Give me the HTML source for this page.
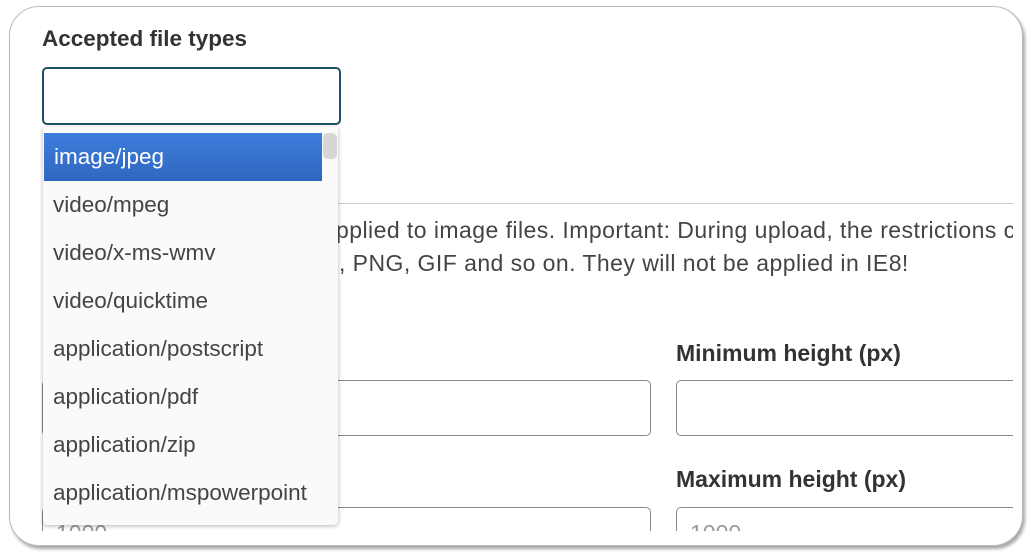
<!DOCTYPE html>
<html><head><meta charset="utf-8"><style>
html,body{margin:0;padding:0;background:#fff;width:1032px;height:556px;overflow:hidden;font-family:"Liberation Sans",sans-serif;color:#333}
.card{position:absolute;left:9px;top:6px;width:1012px;height:538px;border:1px solid #bbb;border-radius:30px;box-shadow:2px 3px 3px rgba(0,0,0,.35);background:#fff;overflow:hidden}
.clip{position:absolute;left:0;top:0;width:1003px;height:524px;overflow:hidden}
.abs{position:absolute;white-space:nowrap}
.lbl{font-weight:bold;font-size:22.5px;color:#333}
.txt{font-size:23px;color:#444}
.inp{position:absolute;border:1px solid #888;border-radius:5px;background:#fff}
.dd{position:absolute;left:33px;top:120px;width:295px;height:398px;background:#fafafa;box-shadow:0 1px 4px rgba(0,0,0,.3);border-radius:0 0 4px 4px}
.it{position:absolute;left:0;width:278px;height:48px;line-height:48px;padding-left:10px;font-size:22.5px;color:#444;box-sizing:border-box}
</style></head><body>
<div class="card"><div class="clip">
<div class="abs lbl" style="left:32px;top:19px">Accepted file types</div>
<div class="inp" style="left:32px;top:60px;width:295px;height:54px;border:2px solid #1f4f63"></div>
<div class="abs" style="left:328px;top:196px;width:680px;height:1px;background:#ccc"></div>
<div class="abs txt" style="left:326px;top:210px;letter-spacing:0.45px">pplied to image files. Important: During upload, the restrictions c</div>
<div class="abs txt" style="left:329px;top:243px;letter-spacing:0.45px">, PNG, GIF and so on. They will not be applied in IE8!</div>
<div class="abs lbl" style="left:666px;top:333px;font-size:23px">Minimum height (px)</div>
<div class="inp" style="left:32px;top:373px;width:607px;height:54px"></div>
<div class="inp" style="left:666px;top:373px;width:400px;height:54px"></div>
<div class="abs lbl" style="left:666px;top:459px;font-size:23px">Maximum height (px)</div>
<div class="inp" style="left:32px;top:500px;width:607px;height:54px"></div>
<div class="inp" style="left:666px;top:500px;width:400px;height:54px"></div>
<div class="abs txt" style="left:680px;top:513px;color:#999">1000</div>
<div class="abs txt" style="left:46px;top:513px;color:#999">1000</div>
<div class="dd">
<div class="it" style="top:6px;background:linear-gradient(#3d7ddc,#2f67c0);color:#fff;left:1px;width:278px">image/jpeg</div>
<div class="abs" style="left:280px;top:6px;width:14px;height:26px;background:#d6d6d6;border-radius:5px"></div>
<div class="it" style="top:54px">video/mpeg</div>
<div class="it" style="top:102px">video/x-ms-wmv</div>
<div class="it" style="top:150px">video/quicktime</div>
<div class="it" style="top:198px">application/postscript</div>
<div class="it" style="top:246px">application/pdf</div>
<div class="it" style="top:294px">application/zip</div>
<div class="it" style="top:342px">application/mspowerpoint</div>
</div>
</div></div>
</body></html>
